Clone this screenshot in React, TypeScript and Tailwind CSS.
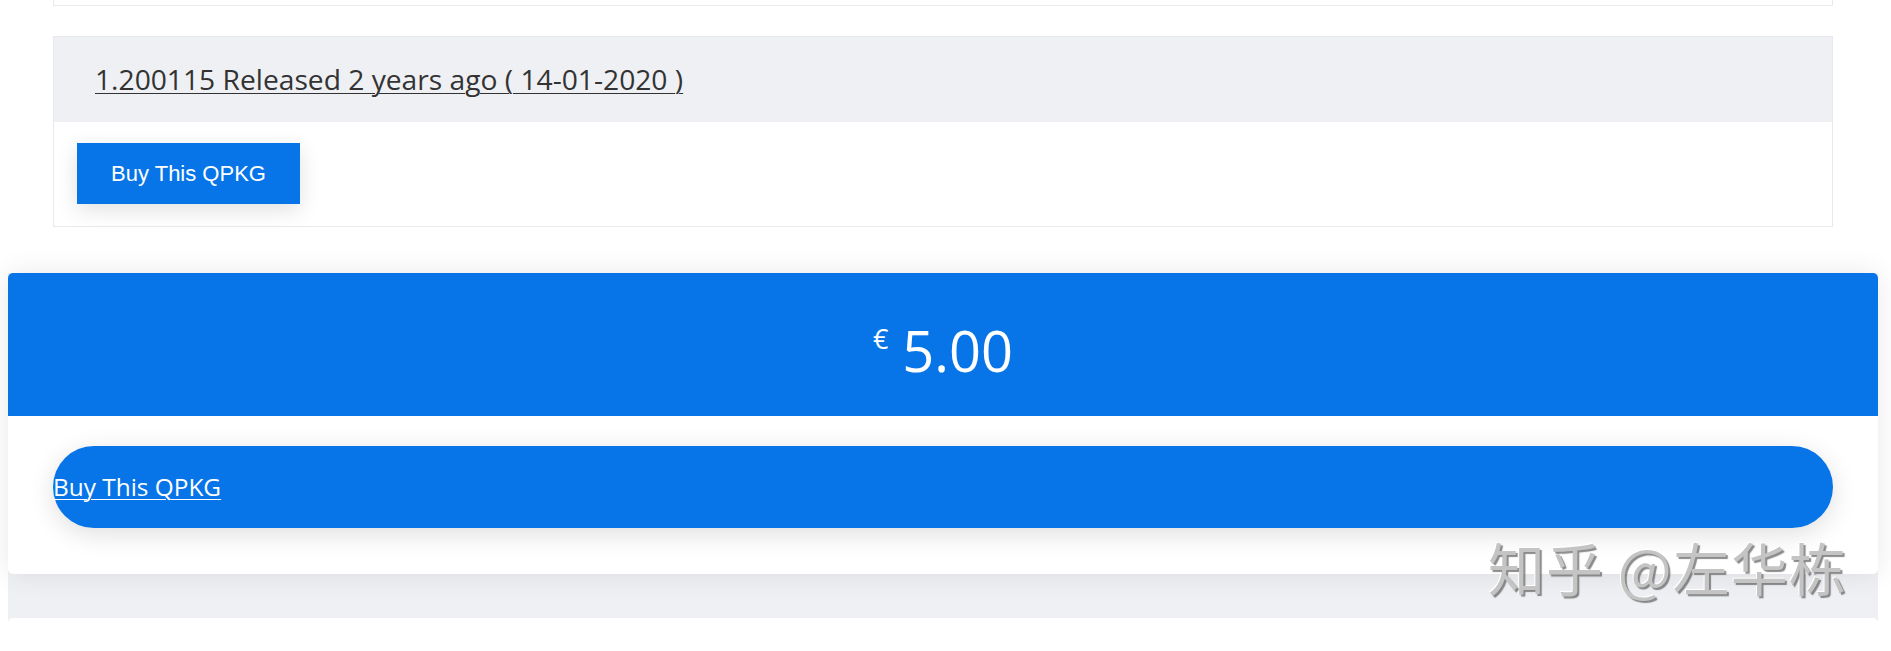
export default function App() {
  return (
    <div className="relative min-h-screen bg-white font-['Open_Sans',sans-serif] overflow-hidden">
      <div className="ml-[8px] mr-[13px] bg-[#eff0f4]">
        {/* Release card */}
        <div className="bg-white px-[45px] pb-[46px]">
          {/* tail of previous release box */}
          <div className="h-[6px] border border-t-0 border-[#e8e9ec]" />

          <div className="mt-[30px] border border-[#e8e9ec]">
            <div className="h-[85px] bg-[#eff0f4] flex items-center pl-[41px]">
              <a href="#" className="text-[28.2px] text-[#333] underline underline-offset-[3px] decoration-1">
                1.200115 Released 2 years ago ( 14-01-2020 )
              </a>
            </div>
            <div className="pt-[21px] pb-[22px] px-[23px]">
              <button className="w-[223px] h-[61px] bg-[#0775e8] text-white text-[22px] font-['Liberation_Sans',sans-serif] shadow-[0_6px_22px_rgba(0,0,0,0.12)]">
                Buy This QPKG
              </button>
            </div>
          </div>
        </div>

        {/* Price card */}
        <div className="relative z-10 bg-white rounded-[5px] shadow-[0_0_28px_rgba(0,0,0,0.09)]">
          <div className="h-[143px] bg-[#0775e8] rounded-t-[5px] flex items-center justify-center pt-[10px]">
            <div className="flex items-start text-white">
              <span className="text-[27px] leading-none mt-[3px] mr-[14px]">€</span>
              <span className="text-[56px] leading-none">5.00</span>
            </div>
          </div>
          <div className="px-[45px] pt-[30px] pb-[46px]">
            <div className="h-[82px] rounded-full bg-[#0775e8] flex items-center shadow-[0_6px_26px_rgba(0,0,0,0.13)]">
              <a href="#" className="text-[24.4px] text-white underline underline-offset-[3px] decoration-1">
                Buy This QPKG
              </a>
            </div>
          </div>
        </div>

        <div className="h-[44px]" />

        {/* Next card */}
        <div className="h-[40px] bg-white rounded-t-[5px]" />
      </div>

      {/* watermark */}
      <div className="absolute z-20 left-[1488px] top-[538px] text-[57px] leading-none text-[#c4c4c4] font-['Noto_Sans_CJK_SC',sans-serif] tracking-[1px] [text-shadow:2px_2px_1px_rgba(90,90,90,0.7),-1px_-1px_0_#fff] pointer-events-none whitespace-nowrap">
        知乎 @左华栋
      </div>
    </div>
  );
}
